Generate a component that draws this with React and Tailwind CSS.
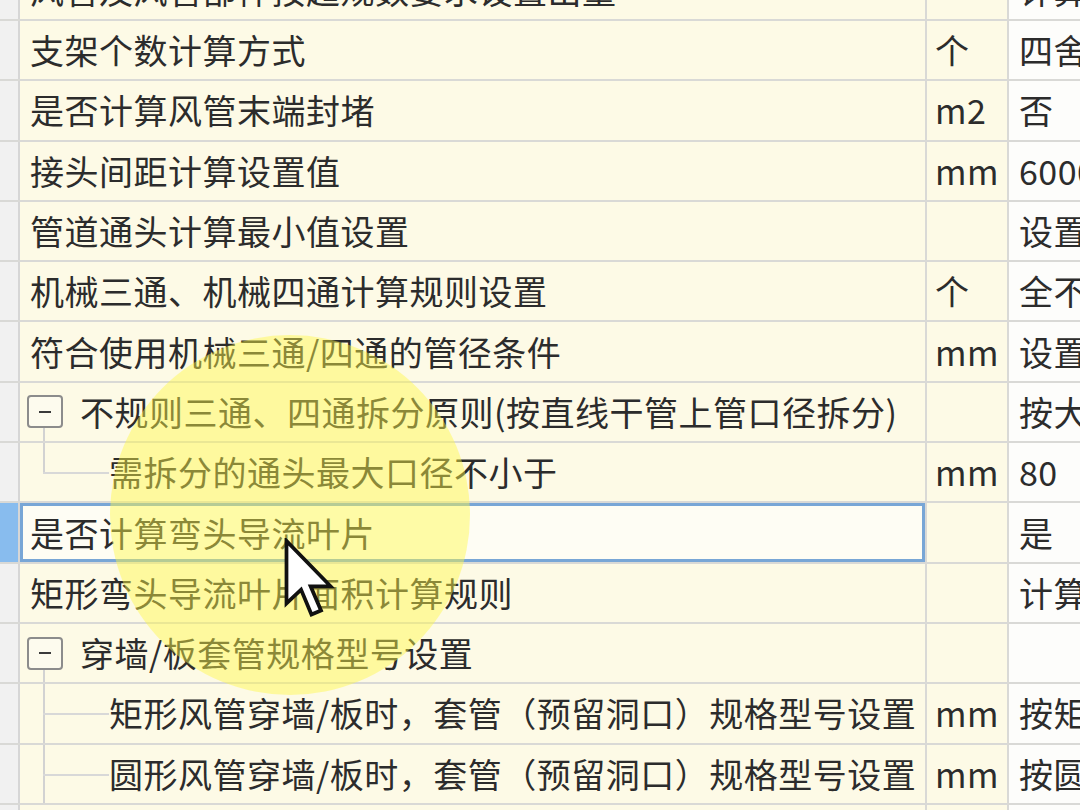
import React from "react";

const rows = [
  { name: "风管及风管部件按超规数要求设置出量", unit: "", value: "计算" },
  { name: "支架个数计算方式", unit: "个", value: "四舍五入" },
  { name: "是否计算风管末端封堵", unit: "m2", value: "否" },
  { name: "接头间距计算设置值", unit: "mm", value: "6000" },
  { name: "管道通头计算最小值设置", unit: "", value: "设置" },
  { name: "机械三通、机械四通计算规则设置", unit: "个", value: "全不计算" },
  { name: "符合使用机械三通/四通的管径条件", unit: "mm", value: "设置" },
  { name: "不规则三通、四通拆分原则(按直线干管上管口径拆分)", unit: "", value: "按大口径", type: "parent" },
  { name: "需拆分的通头最大口径不小于", unit: "mm", value: "80", type: "childLast" },
  { name: "是否计算弯头导流叶片", unit: "", value: "是", selected: true },
  { name: "矩形弯头导流叶片面积计算规则", unit: "", value: "计算" },
  { name: "穿墙/板套管规格型号设置", unit: "", value: "", type: "parent" },
  { name: "矩形风管穿墙/板时，套管（预留洞口）规格型号设置", unit: "mm", value: "按矩形", type: "child" },
  { name: "圆形风管穿墙/板时，套管（预留洞口）规格型号设置", unit: "mm", value: "按圆形", type: "child" },
  { name: "其他设置", unit: "", value: "" },
];

function NameCell({ row }) {
  const t = row.type;
  if (t === "parent") {
    return (
      <div className="flex items-center h-full pl-[7px]">
        <div className="relative w-[36px] h-[33px] shrink-0">
          <div className="w-full h-full border-2 border-[#8c8c8c] rounded-[4px] flex items-center justify-center bg-[#fdfbee]">
            <div className="w-[12px] h-[2px] bg-[#3a3a3a]" />
          </div>
          <div className="absolute left-[16px] top-[33px] w-[2px] h-[20px] bg-[#d2d2d2]" />
        </div>
        <span className="ml-[17px] whitespace-nowrap">{row.name}</span>
      </div>
    );
  }
  if (t === "child" || t === "childLast") {
    return (
      <div className="flex items-center h-full">
        <div className="relative w-[89px] h-full shrink-0">
          <div
            className={
              t === "child"
                ? "absolute left-[23px] top-[-2px] bottom-[-2px] w-[2px] bg-[#d2d2d2]"
                : "absolute left-[23px] top-[-2px] h-[calc(50%+2px)] w-[2px] bg-[#d2d2d2]"
            }
          />
          <div className="absolute left-[23px] right-0 top-1/2 h-[2px] bg-[#d8d8d8]" />
        </div>
        <span className="whitespace-nowrap">{row.name}</span>
      </div>
    );
  }
  return (
    <div className="flex items-center h-full pl-[10px]">
      <span className="whitespace-nowrap">{row.name}</span>
    </div>
  );
}

export default function App() {
  return (
    <div
      className="relative w-[1080px] h-[810px] overflow-hidden bg-[#fdfdfb] text-[#2c2c2c] text-[34px] leading-[40px] tracking-[0.5px]"
      style={{ fontFamily: '"Noto Sans CJK SC", "Noto Sans", sans-serif' }}
    >
      <div className="flex flex-col mt-[-39.3px]">
        {rows.map((row, i) => (
          <div key={i} className="flex h-[60.3px] shrink-0 border-b-2 border-[#d9d9d6]">
            <div
              className={
                row.selected
                  ? "w-[20px] shrink-0 border-r-2 border-[#d6d6d6] bg-[#88bcee]"
                  : "w-[20px] shrink-0 border-r-2 border-[#d6d6d6] bg-[#f1f1f1]"
              }
            />
            <div
              className={
                row.selected
                  ? "w-[907px] shrink-0 border-r-2 border-[#d9d9d6] bg-[#fefdf4] shadow-[inset_0_0_0_3px_#78a6d6] overflow-hidden"
                  : "w-[907px] shrink-0 border-r-2 border-[#d9d9d6] bg-[#fdfae6] overflow-hidden"
              }
            >
              <NameCell row={row} />
            </div>
            <div className="w-[82px] shrink-0 border-r-2 border-[#d9d9d6] bg-[#fdfae6] flex items-center pl-[8px] whitespace-nowrap overflow-hidden">
              {row.unit}
            </div>
            <div className="flex-1 flex items-center pl-[10px] whitespace-nowrap overflow-hidden bg-[#fdfdfb]">
              {row.value}
            </div>
          </div>
        ))}
      </div>

      {/* cursor highlight */}
      <div className="absolute left-[110px] top-[335px] w-[360px] h-[360px] rounded-full bg-[rgba(255,248,70,0.45)] pointer-events-none" />

      {/* mouse cursor */}
      <svg
        className="absolute left-[284px] top-[538px] pointer-events-none"
        width="52"
        height="82"
        viewBox="0 0 12.5 19.5"
      >
        <path
          d="M0.6 0.6 L0.6 15.6 L4.1 12.3 L6.6 18.3 L8.9 17.3 L6.4 11.5 L11.2 11.5 Z"
          fill="#ffffff"
          stroke="#111111"
          strokeWidth="0.9"
          strokeLinejoin="miter"
        />
      </svg>
    </div>
  );
}
